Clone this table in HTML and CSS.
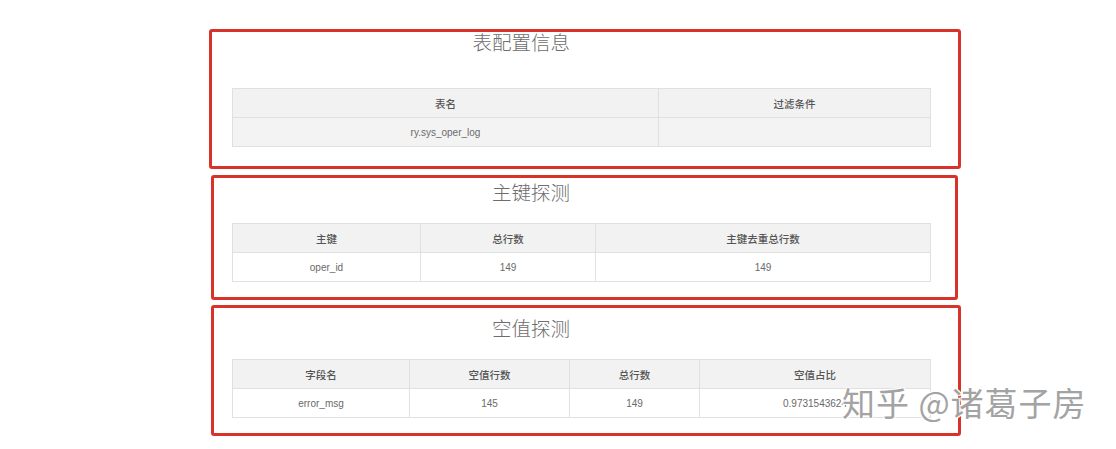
FILE: index.html
```html
<!DOCTYPE html>
<html lang="zh-CN">
<head>
  <meta charset="UTF-8">
  <meta name="viewport" content="width=device-width, initial-scale=1.0">
  <title>数据探测</title>
  <link rel="stylesheet" href="styles.css">
</head>
<body>
  <div class="page">
    <section class="panel panel-config">
      <h2 class="panel-title">表配置信息</h2>
      <table class="grid grid-striped">
        <colgroup>
          <col class="c-426">
          <col>
        </colgroup>
        <thead>
          <tr><th>表名</th><th>过滤条件</th></tr>
        </thead>
        <tbody>
          <tr><td>ry.sys_oper_log</td><td></td></tr>
        </tbody>
      </table>
    </section>

    <section class="panel panel-key">
      <h2 class="panel-title">主键探测</h2>
      <table class="grid">
        <colgroup>
          <col class="c-188">
          <col class="c-175">
          <col>
        </colgroup>
        <thead>
          <tr><th>主键</th><th>总行数</th><th>主键去重总行数</th></tr>
        </thead>
        <tbody>
          <tr><td>oper_id</td><td>149</td><td>149</td></tr>
        </tbody>
      </table>
    </section>

    <section class="panel panel-null">
      <h2 class="panel-title">空值探测</h2>
      <table class="grid">
        <colgroup>
          <col class="c-177">
          <col class="c-160">
          <col class="c-130">
          <col>
        </colgroup>
        <thead>
          <tr><th>字段名</th><th>空值行数</th><th>总行数</th><th>空值占比</th></tr>
        </thead>
        <tbody>
          <tr><td>error_msg</td><td>145</td><td>149</td><td>0.9731543624</td></tr>
        </tbody>
      </table>
    </section>

    <div class="watermark">知乎 @诸葛子房</div>
  </div>
</body>
</html>
```

FILE: styles.css
```css
body {
  margin: 0;
  background: #fff;
  font-family: "Liberation Sans", "Noto Sans CJK SC", sans-serif;
  color: #666;
}

.page {
  position: relative;
  width: 1116px;
  height: 449px;
  padding-top: 29px;
  box-sizing: border-box;
  display: flex;
  flex-direction: column;
}

.panel {
  box-sizing: border-box;
  border: 3px solid #d8322b;
  border-radius: 3px;
}

.panel-config {
  margin-left: 209px;
  width: 752px;
  height: 140px;
  padding: 0 0 0 20px;
}

.panel-key {
  margin-left: 211px;
  margin-top: 6px;
  width: 747px;
  height: 125px;
  padding: 4px 0 0 18px;
}

.panel-null {
  margin-left: 211px;
  margin-top: 5px;
  width: 750px;
  height: 131px;
  padding: 10px 0 0 18px;
}

.panel-title {
  width: 338px;
  margin: 0;
  text-align: right;
  font-family: "Noto Sans CJK SC", sans-serif;
  font-size: 19.5px;
  font-weight: 300;
  line-height: 20px;
  color: #6d6d6d;
}

.panel-config .panel-title {
  margin-bottom: 36px;
}

.panel-key .panel-title,
.panel-null .panel-title {
  margin-bottom: 21px;
}

.grid {
  width: 699px;
  border-collapse: collapse;
  table-layout: fixed;
}

.grid th,
.grid td {
  height: 28px;
  padding: 0;
  border: 1px solid #e0e0e0;
  text-align: center;
  vertical-align: middle;
}

.grid th {
  background: #f2f2f2;
  font-family: "Noto Sans CJK SC", sans-serif;
  font-size: 10.5px;
  font-weight: 500;
  color: #555;
}

.grid td {
  font-size: 10px;
  color: #6a6a6a;
}

.grid-striped td {
  background: #f3f3f3;
}

.c-426 { width: 426px; }
.c-188 { width: 188px; }
.c-175 { width: 175px; }
.c-177 { width: 177px; }
.c-160 { width: 160px; }
.c-130 { width: 130px; }

.watermark {
  position: absolute;
  left: 842px;
  top: 382px;
  font-family: "Noto Sans CJK SC", sans-serif;
  font-size: 33px;
  line-height: 40px;
  letter-spacing: 1px;
  color: #a3a3a3;
  text-shadow: 1px 1px 0 #fff, -1px -1px 0 #fff, 1px -1px 0 #fff, -1px 1px 0 #fff;
  white-space: nowrap;
}
```
